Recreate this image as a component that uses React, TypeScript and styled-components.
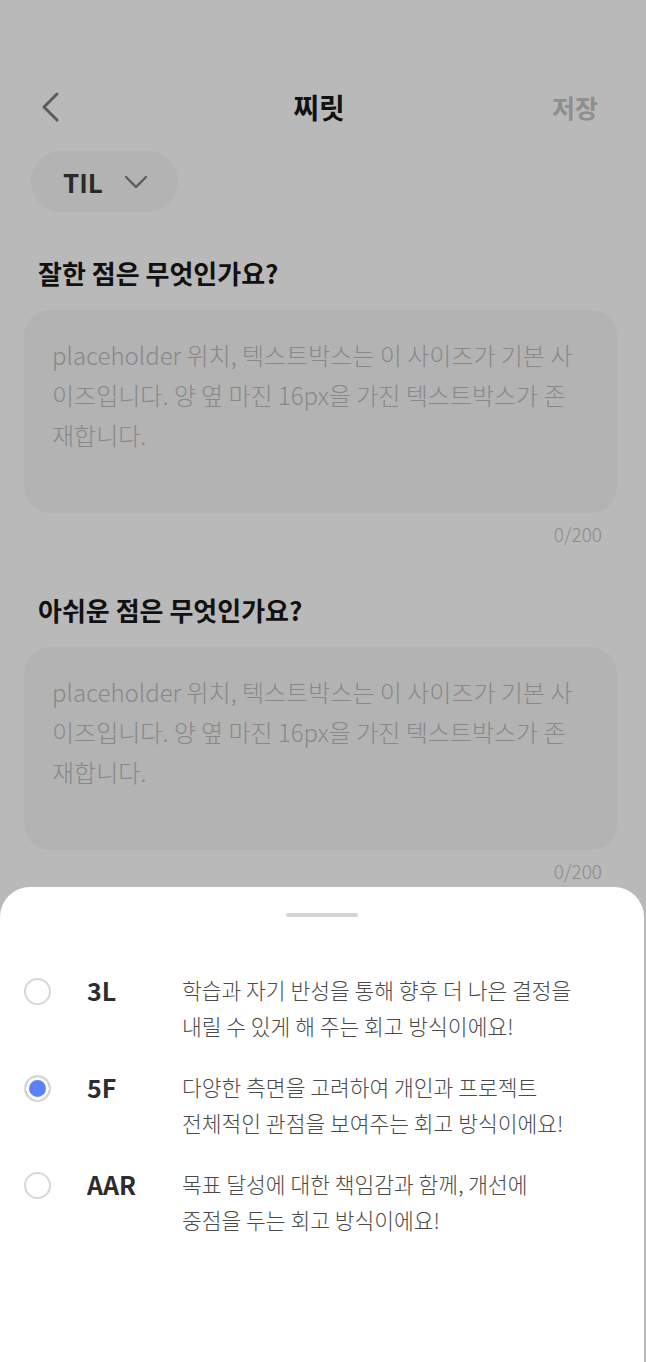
import React, { useState } from "react";
import styled, { createGlobalStyle } from "styled-components";

const GlobalStyle = createGlobalStyle`
  * { box-sizing: border-box; }
  html, body { margin: 0; padding: 0; background: #ffffff; }
  body { font-family: "Noto Sans CJK KR", "Noto Sans", sans-serif; }
`;

const Screen = styled.div`
  position: relative;
  width: 100%;
  min-height: 1362px;
  background: #ffffff;
  overflow: hidden;
`;

const Header = styled.header`
  display: grid;
  grid-template-columns: 1fr auto 1fr;
  align-items: center;
  height: 56px;
  margin-top: 79px;
  padding: 0 48px 0 40px;
`;

const BackButton = styled.button`
  justify-self: start;
  display: flex;
  align-items: center;
  padding: 0;
  border: none;
  background: none;
  color: #7f7f7f;
`;

const Title = styled.h1`
  margin: 0;
  font-size: 28px;
  font-weight: 700;
  color: #181818;
  line-height: 1;
`;

const SaveButton = styled.button`
  justify-self: end;
  padding: 0;
  border: none;
  background: none;
  font-family: inherit;
  font-size: 25px;
  font-weight: 600;
  color: #c4c4c4;
`;

const Body = styled.main`
  display: flex;
  flex-direction: column;
  padding: 0 29px 0 24px;
`;

const Chip = styled.button`
  align-self: flex-start;
  display: flex;
  align-items: center;
  gap: 21px;
  height: 61px;
  margin: 16px 0 0 7px;
  padding: 0 30px 0 32px;
  border: none;
  border-radius: 31px;
  background: #f7f7f7;
  font-family: inherit;
  font-size: 26px;
  font-weight: 700;
  color: #3a3a3a;
  svg { color: #7f7f7f; }
`;

const Question = styled.h2<{ $first?: boolean }>`
  margin: ${(p) => (p.$first ? "44px" : "45px")} 0 20px 14px;
  font-size: 26px;
  line-height: 34px;
  font-weight: 700;
  color: #181818;
`;

const TextBox = styled.textarea`
  display: block;
  width: 100%;
  height: 203px;
  padding: 25px 14px 0 28px;
  border: none;
  border-radius: 26px;
  background: #f7f7f7;
  resize: none;
  outline: none;
  font-family: inherit;
  font-size: 24px;
  font-weight: 300;
  line-height: 40px;
  color: #333;
  &::placeholder { color: #bcbcbc; }
`;

const Counter = styled.span`
  align-self: flex-end;
  margin: 7px 15px 0 0;
  font-size: 19px;
  font-weight: 300;
  line-height: 28px;
  color: #c2c2c2;
`;

const Dim = styled.div`
  position: fixed;
  inset: 0;
  background: rgba(0, 0, 0, 0.275);
`;

const Sheet = styled.section`
  position: fixed;
  left: 0;
  right: 2px;
  bottom: 0;
  height: 475px;
  display: flex;
  flex-direction: column;
  align-items: center;
  background: #ffffff;
  border-radius: 30px 30px 0 0;
`;

const Handle = styled.div`
  width: 72px;
  height: 4px;
  margin-top: 26px;
  border-radius: 2px;
  background: #d3d4d8;
`;

const OptionList = styled.div`
  align-self: stretch;
  display: flex;
  flex-direction: column;
  gap: 25px;
  padding: 55px 24px 0 24px;
`;

const OptionRow = styled.label`
  display: grid;
  grid-template-columns: 63px 95px 1fr;
  align-items: start;
  cursor: pointer;
`;

const Radio = styled.input`
  appearance: none;
  width: 27px;
  height: 27px;
  margin: 6px 0 0 0;
  border: 2px solid #d6d6dc;
  border-radius: 50%;
  background: #ffffff;
  &:checked {
    background: #5a82f5;
    box-shadow: inset 0 0 0 3px #ffffff;
  }
`;

const OptionName = styled.span`
  font-size: 25px;
  line-height: 36px;
  font-weight: 600;
  color: #2d2d2d;
`;

const OptionDesc = styled.p`
  margin: 0;
  font-size: 21.5px;
  font-weight: 300;
  line-height: 36px;
  color: #4a4a4a;
  white-space: pre-line;
`;

const PLACEHOLDER =
  "placeholder 위치, 텍스트박스는 이 사이즈가 기본 사\n이즈입니다. 양 옆 마진 16px을 가진 텍스트박스가 존\n재합니다.";

const OPTIONS = [
  { id: "3L", desc: "학습과 자기 반성을 통해 향후 더 나은 결정을\n내릴 수 있게 해 주는 회고 방식이에요!" },
  { id: "5F", desc: "다양한 측면을 고려하여 개인과 프로젝트\n전체적인 관점을 보여주는 회고 방식이에요!" },
  { id: "AAR", desc: "목표 달성에 대한 책임감과 함께, 개선에\n중점을 두는 회고 방식이에요!" },
];

export default function App() {
  const [selected, setSelected] = useState("5F");
  return (
    <>
      <GlobalStyle />
      <Screen>
        <Header>
          <BackButton aria-label="뒤로">
            <svg width="22" height="30" viewBox="0 0 22 30" fill="none">
              <polyline points="17,2 4,15 17,28" stroke="currentColor" strokeWidth="3" strokeLinecap="round" strokeLinejoin="round" />
            </svg>
          </BackButton>
          <Title>찌릿</Title>
          <SaveButton>저장</SaveButton>
        </Header>
        <Body>
          <Chip>
            TIL
            <svg width="24" height="14" viewBox="0 0 24 14" fill="none">
              <polyline points="2,2 12,12 22,2" stroke="currentColor" strokeWidth="2.4" strokeLinecap="round" strokeLinejoin="round" />
            </svg>
          </Chip>
          <Question $first>잘한 점은 무엇인가요?</Question>
          <TextBox placeholder={PLACEHOLDER} />
          <Counter>0/200</Counter>
          <Question>아쉬운 점은 무엇인가요?</Question>
          <TextBox placeholder={PLACEHOLDER} />
          <Counter>0/200</Counter>
        </Body>
        <Dim />
        <Sheet>
          <Handle />
          <OptionList>
            {OPTIONS.map((o) => (
              <OptionRow key={o.id}>
                <Radio
                  type="radio"
                  name="method"
                  checked={selected === o.id}
                  onChange={() => setSelected(o.id)}
                />
                <OptionName>{o.id}</OptionName>
                <OptionDesc>{o.desc}</OptionDesc>
              </OptionRow>
            ))}
          </OptionList>
        </Sheet>
      </Screen>
    </>
  );
}
